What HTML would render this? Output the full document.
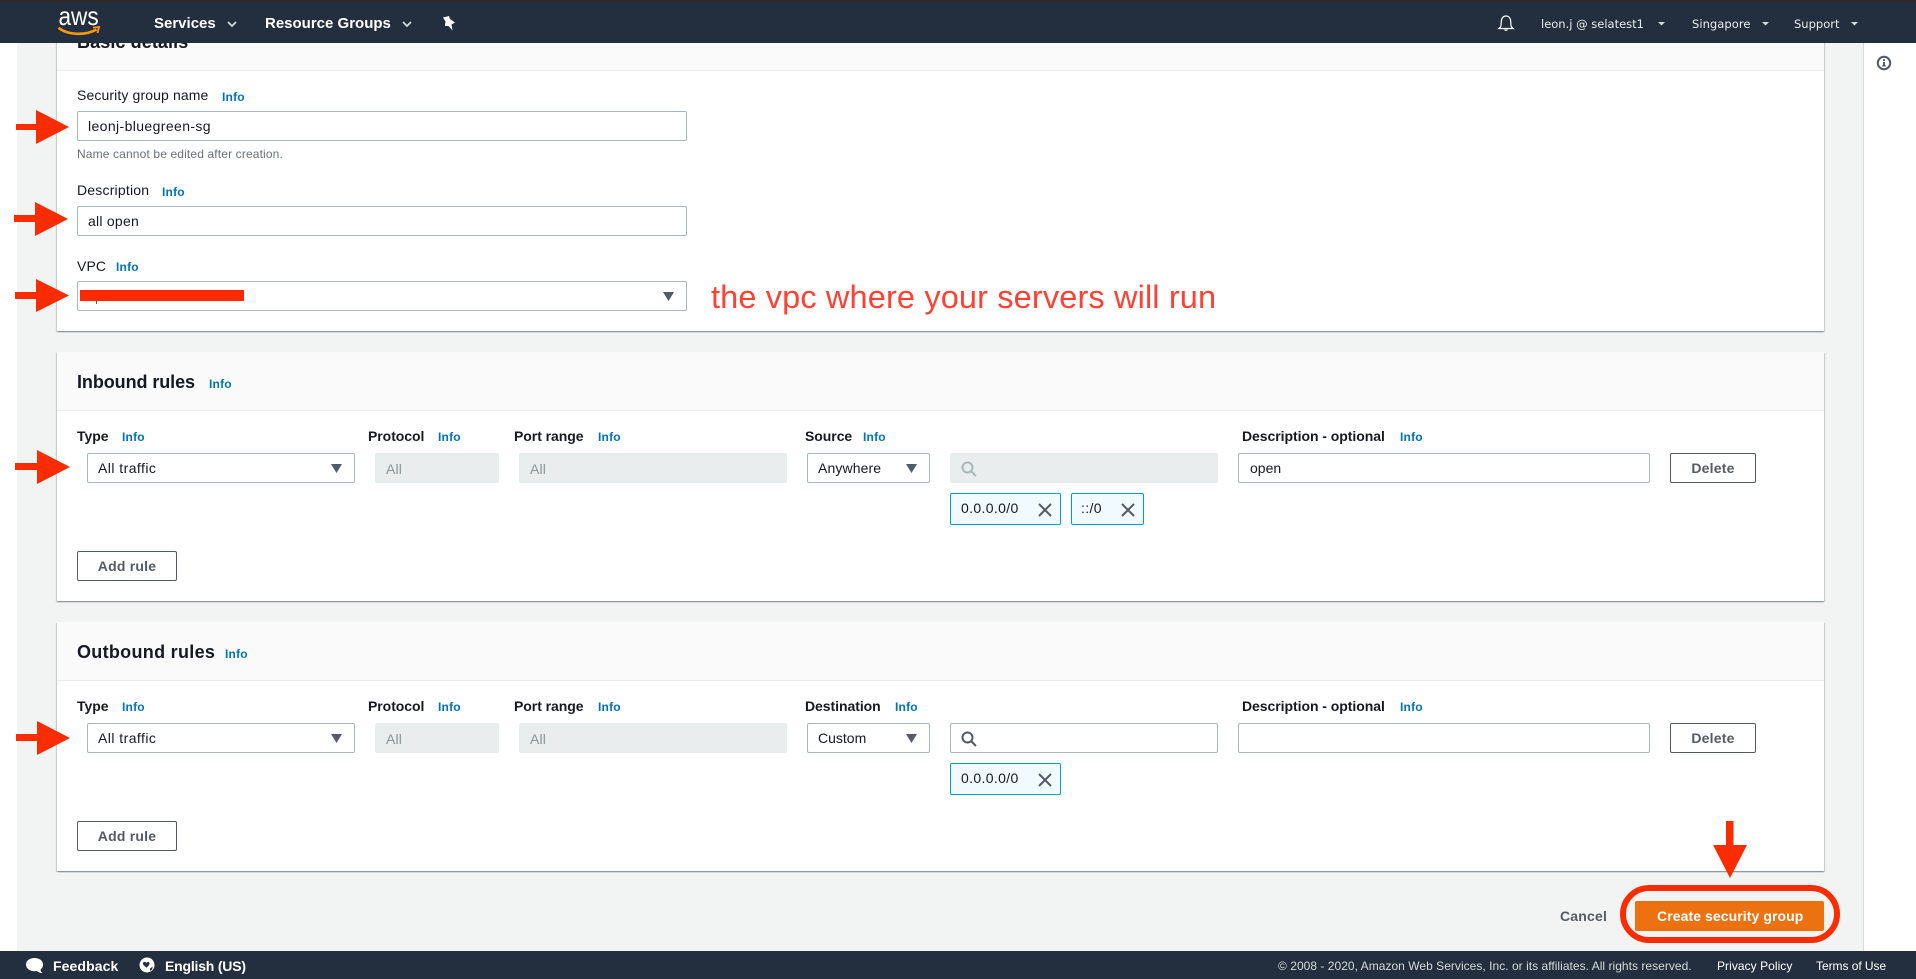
<!DOCTYPE html>
<html><head><meta charset="utf-8"><title>Create security group</title>
<style>
html,body{margin:0;padding:0;width:1916px;height:979px;overflow:hidden;background:#f2f3f3}
body{position:relative;font-family:"Liberation Sans",sans-serif;color:#16191f}
.a{position:absolute;box-sizing:border-box}
.t{position:absolute;white-space:nowrap;line-height:20px;font-size:14px;letter-spacing:.12px}
.b{font-weight:700;letter-spacing:-.05px}
.i{position:absolute;white-space:nowrap;line-height:20px;font-size:12px;font-weight:700;color:#0073bb;letter-spacing:.2px}
.card{position:absolute;box-sizing:border-box;left:57px;width:1767px;background:#fff;box-shadow:0 1px 1px 0 rgba(0,28,36,.3),1px 1px 1px 0 rgba(0,28,36,.15),-1px 1px 1px 0 rgba(0,28,36,.15)}
.hd{position:absolute;left:0;top:0;width:100%;background:#fafafa;border-bottom:1px solid #eaeded;box-sizing:border-box}
.inp{position:absolute;box-sizing:border-box;background:#fff;border:1px solid #aab7b8;border-radius:2px;height:30px}
.dis{position:absolute;background:#eaeded;border-radius:2px;height:30px}
.btn{position:absolute;box-sizing:border-box;background:#fff;border:1px solid #545b64;border-radius:2px;height:30px;text-align:center;font-size:14px;font-weight:700;color:#545b64;line-height:28px;letter-spacing:.2px}
.tok{position:absolute;box-sizing:border-box;background:#f1faff;border:1px solid #00a1c9;border-radius:2px;height:32px}
.w{color:#fff}
.nr{color:#d5dbdb}
svg{position:absolute;overflow:visible}
</style></head><body>

<!-- side strips -->
<div class="a" style="left:0;top:0;width:17px;height:979px;background:#fff"></div>
<div class="a" style="left:1863px;top:0;width:53px;height:979px;background:#fff;border-left:1px solid #d5dbdb"></div>
<svg style="left:1876px;top:55px" width="16" height="16" viewBox="0 0 16 16"><circle cx="8" cy="8" r="6.2" fill="none" stroke="#545b64" stroke-width="2"/><rect x="7" y="7" width="2" height="4.2" fill="#545b64"/><rect x="7" y="4.2" width="2" height="1.8" fill="#545b64"/><rect x="6" y="10.4" width="4" height="1" fill="#545b64"/></svg>

<!-- Basic details card -->
<div class="card" style="top:0;height:331px">
 <div class="hd" style="height:71px"></div>
</div>
<div class="t b" style="left:77px;top:32px;font-size:18px;letter-spacing:.1px">Basic details</div>

<div class="t" style="left:77px;top:85px">Security group name</div><div class="i" style="left:222px;top:87px">Info</div>
<div class="inp" style="left:77px;top:111px;width:610px"></div>
<div class="t" style="left:88px;top:116px;letter-spacing:.39px">leonj-bluegreen-sg</div>
<div class="t" style="left:77px;top:144px;font-size:12px;color:#687078;letter-spacing:.14px">Name cannot be edited after creation.</div>

<div class="t" style="left:77px;top:180px;letter-spacing:.2px">Description</div><div class="i" style="left:162px;top:182px">Info</div>
<div class="inp" style="left:77px;top:206px;width:610px"></div>
<div class="t" style="left:88px;top:211px;letter-spacing:.25px">all open</div>

<div class="t" style="left:77px;top:256px">VPC</div><div class="i" style="left:116px;top:257px">Info</div>
<div class="inp" style="left:77px;top:281px;width:610px"></div>
<div class="a" style="left:96px;top:300px;width:1px;height:4px;background:#545b64"></div>
<div class="a" style="left:80px;top:290px;width:164px;height:11px;background:#ff2a00"></div>
<svg style="left:663px;top:292px" width="11" height="9"><polygon points="0,0 11,0 5.5,9" fill="#545b64"/></svg>
<div class="t" style="left:711px;top:287px;font-size:32.5px;line-height:20px;color:#ff4133;letter-spacing:.14px">the vpc where your servers will run</div>

<!-- Inbound -->
<div class="card" style="top:352px;height:249px"><div class="hd" style="height:59px"></div></div>
<div class="t b" style="left:77px;top:372px;font-size:18px;letter-spacing:-.08px">Inbound rules</div><div class="i" style="left:209px;top:374px">Info</div>
<div class="t b" style="left:77px;top:426px">Type</div><div class="i" style="left:122px;top:427px">Info</div>
<div class="t b" style="left:368px;top:426px">Protocol</div><div class="i" style="left:438px;top:427px">Info</div>
<div class="t b" style="left:514px;top:426px">Port range</div><div class="i" style="left:598px;top:427px">Info</div>
<div class="t b" style="left:805px;top:426px">Source</div><div class="i" style="left:863px;top:427px">Info</div>
<div class="t b" style="left:1242px;top:426px">Description - optional</div><div class="i" style="left:1400px;top:427px">Info</div>

<div class="inp" style="left:87px;top:453px;width:268px"></div>
<div class="t" style="left:98px;top:458px;letter-spacing:.45px">All traffic</div>
<svg style="left:331px;top:464px" width="11" height="9"><polygon points="0,0 11,0 5.5,9" fill="#545b64"/></svg>
<div class="dis" style="left:375px;top:453px;width:124px"></div><div class="t" style="left:386px;top:459px;color:#879596">All</div>
<div class="dis" style="left:519px;top:453px;width:268px"></div><div class="t" style="left:530px;top:459px;color:#879596">All</div>
<div class="inp" style="left:807px;top:453px;width:123px"></div>
<div class="t" style="left:818px;top:458px">Anywhere</div>
<svg style="left:906px;top:464px" width="11" height="9"><polygon points="0,0 11,0 5.5,9" fill="#545b64"/></svg>
<div class="dis" style="left:950px;top:453px;width:268px"></div>
<svg style="left:961px;top:461px" width="16" height="16"><circle cx="6.5" cy="6.5" r="5" fill="none" stroke="#aab7b8" stroke-width="2"/><line x1="10" y1="10" x2="15" y2="15" stroke="#aab7b8" stroke-width="2"/></svg>
<div class="inp" style="left:1238px;top:453px;width:412px"></div>
<div class="t" style="left:1250px;top:458px;letter-spacing:0">open</div>
<div class="btn" style="left:1670px;top:453px;width:86px">Delete</div>

<div class="tok" style="left:950px;top:493px;width:111px"></div>
<div class="t" style="left:961px;top:498px;letter-spacing:.35px">0.0.0.0/0</div>
<svg style="left:1038px;top:503px" width="14" height="14"><path d="M1 1L13 13M13 1L1 13" stroke="#545b64" stroke-width="2" fill="none"/></svg>
<div class="tok" style="left:1071px;top:493px;width:73px"></div>
<div class="t" style="left:1081px;top:498px;letter-spacing:.35px">::/0</div>
<svg style="left:1121px;top:503px" width="14" height="14"><path d="M1 1L13 13M13 1L1 13" stroke="#545b64" stroke-width="2" fill="none"/></svg>
<div class="btn" style="left:77px;top:551px;width:100px">Add rule</div>

<!-- Outbound -->
<div class="card" style="top:622px;height:249px"><div class="hd" style="height:59px"></div></div>
<div class="t b" style="left:77px;top:642px;font-size:18px;letter-spacing:.3px">Outbound rules</div><div class="i" style="left:225px;top:644px">Info</div>
<div class="t b" style="left:77px;top:696px">Type</div><div class="i" style="left:122px;top:697px">Info</div>
<div class="t b" style="left:368px;top:696px">Protocol</div><div class="i" style="left:438px;top:697px">Info</div>
<div class="t b" style="left:514px;top:696px">Port range</div><div class="i" style="left:598px;top:697px">Info</div>
<div class="t b" style="left:805px;top:696px">Destination</div><div class="i" style="left:895px;top:697px">Info</div>
<div class="t b" style="left:1242px;top:696px">Description - optional</div><div class="i" style="left:1400px;top:697px">Info</div>

<div class="inp" style="left:87px;top:723px;width:268px"></div>
<div class="t" style="left:98px;top:728px;letter-spacing:.45px">All traffic</div>
<svg style="left:331px;top:734px" width="11" height="9"><polygon points="0,0 11,0 5.5,9" fill="#545b64"/></svg>
<div class="dis" style="left:375px;top:723px;width:124px"></div><div class="t" style="left:386px;top:729px;color:#879596">All</div>
<div class="dis" style="left:519px;top:723px;width:268px"></div><div class="t" style="left:530px;top:729px;color:#879596">All</div>
<div class="inp" style="left:807px;top:723px;width:123px"></div>
<div class="t" style="left:818px;top:728px;letter-spacing:0">Custom</div>
<svg style="left:906px;top:734px" width="11" height="9"><polygon points="0,0 11,0 5.5,9" fill="#545b64"/></svg>
<div class="inp" style="left:950px;top:723px;width:268px"></div>
<svg style="left:961px;top:731px" width="16" height="16"><circle cx="6.5" cy="6.5" r="5" fill="none" stroke="#545b64" stroke-width="2"/><line x1="10" y1="10" x2="15" y2="15" stroke="#545b64" stroke-width="2"/></svg>
<div class="inp" style="left:1238px;top:723px;width:412px"></div>
<div class="btn" style="left:1670px;top:723px;width:86px">Delete</div>
<div class="tok" style="left:950px;top:763px;width:111px"></div>
<div class="t" style="left:961px;top:768px;letter-spacing:.35px">0.0.0.0/0</div>
<svg style="left:1038px;top:773px" width="14" height="14"><path d="M1 1L13 13M13 1L1 13" stroke="#545b64" stroke-width="2" fill="none"/></svg>
<div class="btn" style="left:77px;top:821px;width:100px">Add rule</div>

<!-- Actions -->
<div class="t b" style="left:1560px;top:906px;color:#545b64;letter-spacing:.2px">Cancel</div>
<div class="a" style="left:1635px;top:901px;width:189px;height:30px;background:#ec7211;border-radius:2px"></div>
<div class="t b w" style="left:1657px;top:906px;letter-spacing:.08px">Create security group</div>
<div class="a" style="left:1620px;top:885px;width:220px;height:58px;border:6.5px solid #fb2c00;border-radius:29px"></div>

<!-- Red arrows -->
<svg style="left:0;top:0" width="100" height="800">
<polygon fill="#fb2c00" points="16,124 36,124 36,110 69,127 36,144 36,130 16,130"/>
<polygon fill="#fb2c00" points="14,215 35,215 35,202 68,219 35,236 35,222 14,222"/>
<polygon fill="#fb2c00" points="15,292 36,292 36,279 69,295.5 36,312 36,299 15,299"/>
<polygon fill="#fb2c00" points="15,463 37,463 37,450 70,467 37,484 37,470 15,470"/>
<polygon fill="#fb2c00" points="16,734 37,734 37,721 70,738 37,755 37,741 16,741"/>
</svg>
<svg style="left:1700px;top:815px" width="60" height="70"><polygon fill="#fb2c00" points="26,6 33.5,6 33.5,30 47,30 30,63 13,30 26,30"/></svg>

<!-- Top nav -->
<div class="a" style="left:0;top:0;width:1916px;height:3px;background:#2b2b2d"></div>
<div class="a" style="left:0;top:3px;width:1916px;height:40px;background:#232f3e"></div>
<svg style="left:56px;top:6px" width="46" height="32" viewBox="0 0 46 32">
<text x="2.5" y="19" fill="#fff" font-family="Liberation Sans" font-size="26" transform="translate(2.5 0) scale(.87 1) translate(-2.5 0)">aws</text>
<path d="M2.5 21.8C12 29.5 30 29.5 40.5 23.5" stroke="#f90" stroke-width="2.6" fill="none"/>
<path d="M37 21.6L43 21L41.5 27" stroke="#f90" stroke-width="1.8" fill="none"/>
</svg>
<div class="t b w" style="left:154px;top:14px;font-size:15px;letter-spacing:0">Services</div>
<svg style="left:227px;top:21px" width="10" height="7"><path d="M1 1L5 5L9 1" stroke="#d5dbdb" stroke-width="1.7" fill="none"/></svg>
<div class="t b w" style="left:265px;top:14px;font-size:15px;letter-spacing:0">Resource Groups</div>
<svg style="left:402px;top:21px" width="10" height="7"><path d="M1 1L5 5L9 1" stroke="#d5dbdb" stroke-width="1.7" fill="none"/></svg>
<svg style="left:442px;top:16px" width="14" height="15" viewBox="0 0 14 15"><path d="M1 1.5L7 0L8 3L13 6.5L9.5 8.5L10.5 14.5L6.5 10L3 10L3.5 5.5Z" fill="#fff"/></svg>

<svg style="left:1498px;top:15px" width="16" height="18" viewBox="0 0 16 18"><path d="M1 13.5C3 12 3.2 10.5 3.2 7.5C3.2 3.5 5 1 8 1C11 1 12.8 3.5 12.8 7.5C12.8 10.5 13 12 15 13.5Z" fill="none" stroke="#fff" stroke-width="1.2"/><path d="M5.8 14.5Q8 17.5 10.2 14.5Z" fill="#fff"/></svg>
<div class="t w" style="left:1541px;top:14px;font-family:'DejaVu Sans',sans-serif;font-size:11.5px;letter-spacing:0;color:#eaeded">leon.j @ selatest1</div>
<svg style="left:1658px;top:22px" width="8" height="5"><path d="M0 0H7L3.5 3.5Z" fill="#d5dbdb"/></svg>
<div class="t w" style="left:1692px;top:14px;font-family:'DejaVu Sans',sans-serif;font-size:11.5px;letter-spacing:.05px;color:#eaeded">Singapore</div>
<svg style="left:1762px;top:22px" width="8" height="5"><path d="M0 0H7L3.5 3.5Z" fill="#d5dbdb"/></svg>
<div class="t w" style="left:1794px;top:14px;font-family:'DejaVu Sans',sans-serif;font-size:11.5px;letter-spacing:0;color:#eaeded">Support</div>
<svg style="left:1851px;top:22px" width="8" height="5"><path d="M0 0H7L3.5 3.5Z" fill="#d5dbdb"/></svg>

<!-- Footer -->
<div class="a" style="left:0;top:951px;width:1916px;height:28px;background:#232f3e"></div>
<svg style="left:26px;top:958px" width="18" height="16" viewBox="0 0 18 16"><path d="M8.5 0C13 0 17 2.5 17 6.5C17 9 15.8 10.5 14.5 11.5C14.5 13 15.5 14.5 16.5 15C14 15.2 12 14 11 13C10.5 13.1 9.5 13.2 8.5 13.2C4 13.2 0 10.5 0 6.5C0 2.5 4 0 8.5 0Z" fill="#fff"/></svg>
<div class="t b w" style="left:53px;top:956px;letter-spacing:.1px">Feedback</div>
<svg style="left:139px;top:957px" width="16" height="16" viewBox="0 0 16 16"><circle cx="8" cy="8" r="7.5" fill="#fff"/><path d="M4 6.5C4 4.5 6.5 4.5 7.5 6C8.5 4.5 10.5 4.5 10.5 6.5C10.5 8.5 8.5 9.5 7.5 10.8C6.5 9.5 4 8.5 4 6.5Z" fill="#232f3e"/><path d="M11 11.5L13.8 9.5L13 12.5L11 14Z" fill="#232f3e"/></svg>
<div class="t b w" style="left:165px;top:956px;letter-spacing:-.2px">English (US)</div>
<div class="t nr" style="left:1278px;top:956px;font-size:12px;letter-spacing:.03px">© 2008 - 2020, Amazon Web Services, Inc. or its affiliates. All rights reserved.</div>
<div class="t w" style="left:1717px;top:956px;font-size:12px;letter-spacing:.05px">Privacy Policy</div>
<div class="t w" style="left:1816px;top:956px;font-size:12px;letter-spacing:-.05px">Terms of Use</div>
</body></html>
